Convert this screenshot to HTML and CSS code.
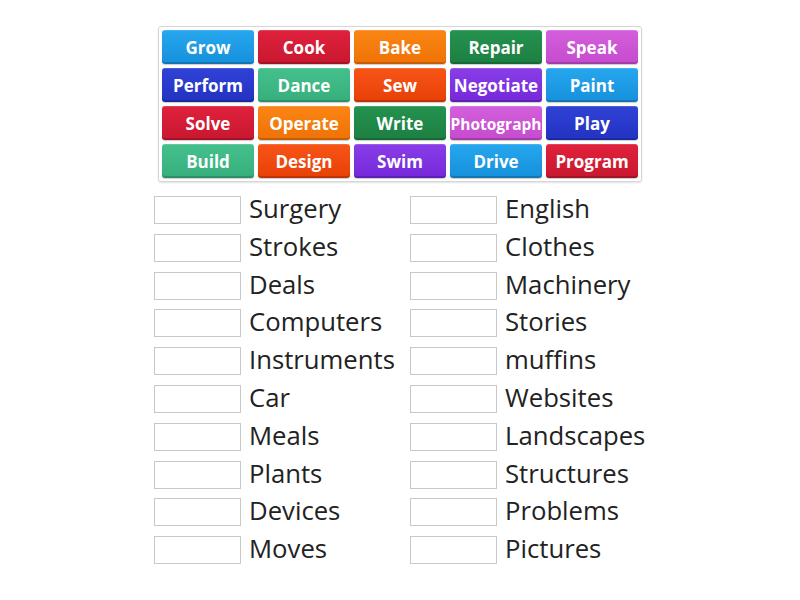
FILE: index.html
```html
<!DOCTYPE html>
<html>
<head>
<meta charset="utf-8">
<link rel="stylesheet" href="styles.css">
</head>
<body>
<div class="page">
  <div class="bank">
    <div class="tile c-lblue">Grow</div>
    <div class="tile c-red">Cook</div>
    <div class="tile c-orange">Bake</div>
    <div class="tile c-green">Repair</div>
    <div class="tile c-pink">Speak</div>
    <div class="tile c-dblue">Perform</div>
    <div class="tile c-teal">Dance</div>
    <div class="tile c-ored">Sew</div>
    <div class="tile c-purple">Negotiate</div>
    <div class="tile c-lblue">Paint</div>
    <div class="tile c-red">Solve</div>
    <div class="tile c-orange">Operate</div>
    <div class="tile c-green">Write</div>
    <div class="tile c-pink small">Photograph</div>
    <div class="tile c-dblue">Play</div>
    <div class="tile c-teal">Build</div>
    <div class="tile c-ored">Design</div>
    <div class="tile c-purple">Swim</div>
    <div class="tile c-lblue">Drive</div>
    <div class="tile c-red">Program</div>
  </div>
  <div class="lists">
    <div class="col">
      <div class="row"><span class="box"></span><span class="word">Surgery</span></div>
      <div class="row"><span class="box"></span><span class="word">Strokes</span></div>
      <div class="row"><span class="box"></span><span class="word">Deals</span></div>
      <div class="row"><span class="box"></span><span class="word">Computers</span></div>
      <div class="row"><span class="box"></span><span class="word">Instruments</span></div>
      <div class="row"><span class="box"></span><span class="word">Car</span></div>
      <div class="row"><span class="box"></span><span class="word">Meals</span></div>
      <div class="row"><span class="box"></span><span class="word">Plants</span></div>
      <div class="row"><span class="box"></span><span class="word">Devices</span></div>
      <div class="row"><span class="box"></span><span class="word">Moves</span></div>
    </div>
    <div class="col">
      <div class="row"><span class="box"></span><span class="word">English</span></div>
      <div class="row"><span class="box"></span><span class="word">Clothes</span></div>
      <div class="row"><span class="box"></span><span class="word">Machinery</span></div>
      <div class="row"><span class="box"></span><span class="word">Stories</span></div>
      <div class="row"><span class="box"></span><span class="word">muffins</span></div>
      <div class="row"><span class="box"></span><span class="word">Websites</span></div>
      <div class="row"><span class="box"></span><span class="word">Landscapes</span></div>
      <div class="row"><span class="box"></span><span class="word">Structures</span></div>
      <div class="row"><span class="box"></span><span class="word">Problems</span></div>
      <div class="row"><span class="box"></span><span class="word">Pictures</span></div>
    </div>
  </div>
</div>
</body>
</html>
```
FILE: styles.css
```css
html, body {
  margin: 0;
  padding: 0;
  background: #ffffff;
}
body {
  font-family: "Open Sans", "Noto Sans", sans-serif;
}
.page {
  padding-top: 26px;
}
.bank {
  width: 476px;
  margin: 0 auto;
  padding: 3px;
  border: 1px solid #d6d6d6;
  border-radius: 3px;
  display: grid;
  grid-template-columns: repeat(5, 92px);
  grid-auto-rows: 34px;
  gap: 4px;
  box-shadow: 0 1px 2px rgba(0,0,0,0.12);
}
.tile {
  display: flex;
  align-items: center;
  justify-content: center;
  color: #ffffff;
  font-weight: 700;
  font-size: 17px;
  border-radius: 3px;
  box-shadow: inset 0 -2px 0 rgba(0,0,0,0.18), inset 0 1px 0 rgba(255,255,255,0.15), 0 1px 1px rgba(0,0,0,0.2);
  padding-top: 1px;
  box-sizing: border-box;
  white-space: nowrap;
}
.tile.small {
  font-size: 15.5px;
}
.c-lblue { background: linear-gradient(#27a7ee, #1690dc); }
.c-red { background: linear-gradient(#e0213c, #c8172f); }
.c-orange { background: linear-gradient(#fa8514, #ef7206); }
.c-green { background: linear-gradient(#24924f, #1c7f42); }
.c-pink { background: linear-gradient(#d45fdc, #c44bcd); }
.c-dblue { background: linear-gradient(#3042d6, #2232c2); }
.c-teal { background: linear-gradient(#45c08d, #36af7c); }
.c-ored { background: linear-gradient(#f75418, #e84006); }
.c-purple { background: linear-gradient(#8a3ee8, #7428d8); }

.lists {
  display: flex;
  margin-left: 154px;
  margin-top: 14px;
}
.col {
  width: 256px;
  display: flex;
  flex-direction: column;
}
.row {
  height: 37.8px;
  display: flex;
  align-items: flex-start;
}
.box {
  width: 87px;
  height: 28px;
  box-sizing: border-box;
  border: 1px solid #c8c8c8;
  background: #ffffff;
  flex: none;
}
.word {
  margin-left: 8px;
  font-size: 25.7px;
  line-height: 28px;
  color: #222222;
  margin-top: -1px;
}
```
